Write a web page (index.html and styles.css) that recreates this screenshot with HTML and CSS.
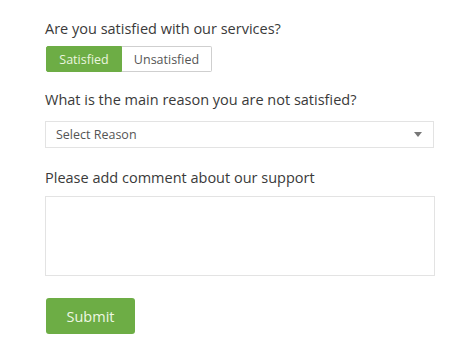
FILE: index.html
```html
<!DOCTYPE html>
<html lang="en">
<head>
    <meta charset="UTF-8">
    <meta name="viewport" content="width=device-width, initial-scale=1.0">
    <title>Support Feedback</title>
    <link rel="stylesheet" href="styles.css">
</head>
<body>
    <form class="feedback-form">
        <div class="form-group">
            <label class="form-label">Are you satisfied with our services?</label>
            <div class="toggle-group">
                <button type="button" class="toggle-button active">Satisfied</button>
                <button type="button" class="toggle-button">Unsatisfied</button>
            </div>
        </div>

        <div class="form-group">
            <label class="form-label">What is the main reason you are not satisfied?</label>
            <div class="select-box">
                <span class="select-text">Select Reason</span>
                <svg class="select-arrow" width="8" height="5" viewBox="0 0 8 5">
                    <path d="M0 0h8L4 5z" fill="#777"></path>
                </svg>
            </div>
        </div>

        <div class="form-group">
            <label class="form-label">Please add comment about our support</label>
            <textarea class="comment-box"></textarea>
        </div>

        <button type="submit" class="submit-button">Submit</button>
    </form>
</body>
</html>
```

FILE: styles.css
```css
* {
    margin: 0;
    padding: 0;
    box-sizing: border-box;
    font-family: 'Open Sans', 'Noto Sans', sans-serif;
}

body {
    background-color: white;
    color: #3d3d3d;
}

.feedback-form {
    padding: 18px 39px 0 45px;
    display: flex;
    flex-direction: column;
}

.form-group {
    display: flex;
    flex-direction: column;
}

.form-label {
    font-size: 14.5px;
    line-height: 21px;
    color: #3a3a3a;
}

.toggle-group {
    display: flex;
    margin: 7px 0 0 1px;
}

.toggle-button {
    height: 26px;
    font-size: 12.5px;
    border: 1px solid #cfcfcf;
    background-color: white;
    color: #555;
    cursor: pointer;
}

.toggle-button:first-child {
    width: 76px;
    border-radius: 2px 0 0 2px;
}

.toggle-button:last-child {
    width: 90px;
    border-left: none;
    border-radius: 0 2px 2px 0;
}

.toggle-button.active {
    background-color: #6dad45;
    border-color: #6dad45;
    color: #eaf5df;
}

.form-group + .form-group {
    margin-top: 17px;
}

.select-box {
    margin: 11px 0 2px;
    height: 27px;
    width: 389px;
    border: 1px solid #e3e3e3;
    display: flex;
    align-items: center;
    justify-content: space-between;
    padding: 0 11px 0 10px;
}

.select-text {
    font-size: 12.5px;
    color: #555;
}

.comment-box {
    margin-top: 8px;
    width: 390px;
    height: 80px;
    border: 1px solid #e3e3e3;
    resize: none;
}

.submit-button {
    margin: 22px 0 0 1px;
    width: 89px;
    height: 36px;
    background-color: #6dad45;
    border: none;
    border-radius: 3px;
    color: #eef7e4;
    font-size: 14.5px;
    cursor: pointer;
}
```
